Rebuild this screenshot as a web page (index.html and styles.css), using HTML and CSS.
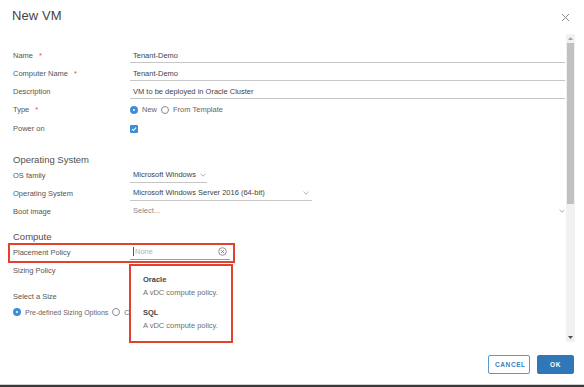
FILE: index.html
```html
<!DOCTYPE html>
<html lang="en">
<head>
    <meta charset="UTF-8">
    <title>New VM</title>
    <link rel="stylesheet" href="styles.css">
</head>
<body>
    <div class="modal">
        <div class="modal-header">
            <div class="title">New VM</div>
            <svg class="close" width="9" height="9" viewBox="0 0 9 9"><path d="M1 1L8 8M8 1L1 8" stroke="#8a8a8a" stroke-width="1"/></svg>
        </div>

        <div class="modal-body">
            <div class="form">
                <div class="row">
                    <div class="label">Name <span class="req">*</span></div>
                    <div class="field input">Tenant-Demo</div>
                </div>
                <div class="row">
                    <div class="label">Computer Name <span class="req">*</span></div>
                    <div class="field input">Tenant-Demo</div>
                </div>
                <div class="row">
                    <div class="label">Description</div>
                    <div class="field input">VM to be deployed in Oracle Cluster</div>
                </div>
                <div class="row">
                    <div class="label">Type <span class="req">*</span></div>
                    <div class="field radios">
                        <span class="radio checked"></span><span class="opt">New</span>
                        <span class="radio"></span><span class="opt">From Template</span>
                    </div>
                </div>
                <div class="row">
                    <div class="label">Power on</div>
                    <div class="field">
                        <span class="checkbox"><svg width="8" height="8" viewBox="0 0 8 8"><path d="M2 4.2L3.4 5.5L6 2.6" fill="none" stroke="#fff" stroke-width="1.1"/></svg></span>
                    </div>
                </div>

                <div class="section first">Operating System</div>
                <div class="row">
                    <div class="label">OS family</div>
                    <div class="field select short">Microsoft Windows <svg class="chev" width="6" height="4" viewBox="0 0 6 4"><path d="M0.5 0.8L3 3.2L5.5 0.8" fill="none" stroke="#999" stroke-width="0.8"/></svg></div>
                </div>
                <div class="row">
                    <div class="label">Operating System</div>
                    <div class="field select medium">Microsoft Windows Server 2016 (64-bit) <svg class="chev right" width="6" height="4" viewBox="0 0 6 4"><path d="M0.5 0.8L3 3.2L5.5 0.8" fill="none" stroke="#999" stroke-width="0.8"/></svg></div>
                </div>
                <div class="row">
                    <div class="label">Boot image</div>
                    <div class="field select plain muted">Select... <svg class="chev right" width="6" height="4" viewBox="0 0 6 4"><path d="M0.5 0.8L3 3.2L5.5 0.8" fill="none" stroke="#999" stroke-width="0.8"/></svg></div>
                </div>

                <div class="section">Compute</div>
                <div class="row highlight">
                    <div class="label">Placement Policy</div>
                    <div class="field combo">
                        <span class="caret"></span><span class="placeholder">None</span>
                        <svg class="clear" width="9" height="9" viewBox="0 0 9 9"><circle cx="4.5" cy="4.5" r="3.8" fill="none" stroke="#777" stroke-width="0.8"/><path d="M3 3L6 6M6 3L3 6" stroke="#777" stroke-width="0.8"/></svg>
                        <div class="menu">
                            <div class="menu-item">
                                <div class="item-title">Oracle</div>
                                <div class="item-desc">A vDC compute policy.</div>
                            </div>
                            <div class="menu-item">
                                <div class="item-title">SQL</div>
                                <div class="item-desc">A vDC compute policy.</div>
                            </div>
                        </div>
                    </div>
                </div>
                <div class="row">
                    <div class="label">Sizing Policy</div>
                    <div class="field"></div>
                </div>

                <div class="sub-label">Select a Size</div>
                <div class="size-options">
                    <span class="radio checked"></span><span class="opt">Pre-defined Sizing Options</span>
                    <span class="radio"></span><span class="opt">Custom Sizing Options</span>
                </div>
            </div>

            <div class="scrollbar">
                <div class="sb-arrow"><svg width="5" height="3" viewBox="0 0 5 3"><path d="M0 3L2.5 0L5 3Z" fill="#a3a3a3"/></svg></div>
                <div class="sb-thumb"></div>
                <div class="sb-track"></div>
                <div class="sb-arrow"><svg width="5" height="3" viewBox="0 0 5 3"><path d="M0 0L2.5 3L5 0Z" fill="#505050"/></svg></div>
            </div>
        </div>

        <div class="modal-footer">
            <button class="btn btn-outline">CANCEL</button>
            <button class="btn btn-primary">OK</button>
        </div>
    </div>
</body>
</html>
```

FILE: styles.css
```css
body {
    margin: 0;
    font-family: "Liberation Sans", Arial, sans-serif;
    color: #565656;
    background: #fff;
}

.modal {
    width: 584px;
    height: 387px;
    box-sizing: border-box;
    display: flex;
    flex-direction: column;
    border-bottom: 2px solid #3a3a3a;
    box-shadow: 0 -1px 0 #d0d0d0 inset;
}

.modal-header {
    height: 34px;
    display: flex;
    justify-content: space-between;
    align-items: flex-start;
    padding: 8px 14px 0 12px;
    box-sizing: border-box;
}

.title {
    font-size: 13px;
    color: #444;
    letter-spacing: 0.1px;
}

.close {
    margin-top: 5px;
}

.modal-body {
    height: 308px;
    display: flex;
    padding-right: 9px;
}

.form {
    flex: 1;
    padding: 13px 1px 0 13px;
    font-size: 7.5px;
}

.row {
    display: grid;
    grid-template-columns: 117px 1fr;
    height: 18px;
    align-items: start;
}

.row:nth-child(4),
.row:nth-child(5) {
    height: 18.5px;
}

.label {
    line-height: 18px;
    color: #555;
    white-space: nowrap;
}

.req {
    color: #e0533c;
    margin-left: 4px;
}

.field {
    height: 16px;
    box-sizing: border-box;
    padding: 3px 0 0 3px;
    line-height: 12px;
    color: #444;
    position: relative;
    white-space: nowrap;
}

.input {
    border-bottom: 1px solid #c6c6c6;
}

.radios {
    display: flex;
    align-items: center;
    padding: 0;
    height: 18px;
}

.radio {
    flex: none;
    width: 6px;
    height: 6px;
    border: 1px solid #8c8c8c;
    border-radius: 50%;
    display: inline-block;
    margin-right: 4px;
    background: #fff;
}

.radio.checked {
    border: 3px solid #3d8ed4;
    width: 2px;
    height: 2px;
}

.opt {
    margin-right: 4px;
    color: #666;
}

.checkbox {
    display: block;
    width: 8px;
    height: 8px;
    margin-top: 2px;
    margin-left: -3px;
    background: #3d8ed4;
    border-radius: 1px;
}

.checkbox svg {
    display: block;
}

.section {
    font-size: 9.5px;
    color: #505050;
    line-height: 14px;
    margin-top: 9px;
}

.section.first {
    margin-top: 15px;
}

.select {
    border-bottom: 1px solid #c6c6c6;
    display: flex;
    align-items: center;
    padding-top: 0;
    height: 16px;
}

.short {
    width: 77px;
}

.medium {
    width: 182px;
}

.plain {
    border-bottom: none;
}

.muted {
    color: #8a8a8a;
}

.chev {
    margin-left: 4px;
}

.chev.right {
    margin-left: auto;
    margin-right: 3px;
}

.plain .chev.right {
    margin-right: 0;
}

.highlight {
    position: relative;
}

.highlight::after {
    content: "";
    position: absolute;
    left: -5px;
    top: -1px;
    width: 223px;
    height: 16px;
    border: 2px solid #e2412e;
}

.combo {
    width: 100px;
    display: flex;
    align-items: center;
    padding-top: 0;
    border-bottom: 1px solid #5aaee0;
    height: 16px;
}

.caret {
    width: 1px;
    height: 9px;
    background: #555;
    margin-right: 1px;
}

.placeholder {
    color: #b0b0b0;
}

.clear {
    margin-left: auto;
    margin-right: 3px;
}

.menu {
    position: absolute;
    left: -1px;
    top: 20px;
    width: 104px;
    height: 79px;
    box-sizing: border-box;
    background: #fff;
    border: 2px solid #e2412e;
    z-index: 10;
    padding: 7px 0 0 12px;
}

.menu-item {
    margin-bottom: 7px;
}

.item-title {
    font-weight: bold;
    color: #444;
    line-height: 13px;
}

.item-desc {
    color: #6f6f6f;
    line-height: 13px;
}

.sub-label {
    margin-top: 10px;
    line-height: 14px;
    color: #555;
}

.size-options {
    display: flex;
    align-items: center;
    height: 16px;
    white-space: nowrap;
}

.size-options .opt {
    font-size: 7px;
    margin-right: 4px;
}

.scrollbar {
    width: 9px;
    background: #f1f1f1;
    display: flex;
    flex-direction: column;
}

.sb-arrow {
    height: 9px;
    display: flex;
    align-items: center;
    justify-content: center;
}

.sb-thumb {
    height: 161px;
    margin: 0 1px;
    background: #c1c1c1;
}

.sb-track {
    flex: 1;
}

.modal-footer {
    flex: 1;
    display: flex;
    justify-content: flex-end;
    align-items: flex-start;
    padding: 13px 10px 0 0;
    gap: 7px;
}

.btn {
    font-family: "Liberation Sans", Arial, sans-serif;
    font-size: 6.5px;
    font-weight: bold;
    letter-spacing: 0.6px;
    height: 19px;
    border-radius: 2px;
    cursor: pointer;
}

.btn-outline {
    width: 42px;
    background: #fff;
    color: #3a7fbf;
    border: 1px solid #5a97cf;
}

.btn-primary {
    width: 37px;
    background: #3077b8;
    color: #fff;
    border: 1px solid #3077b8;
}
```
